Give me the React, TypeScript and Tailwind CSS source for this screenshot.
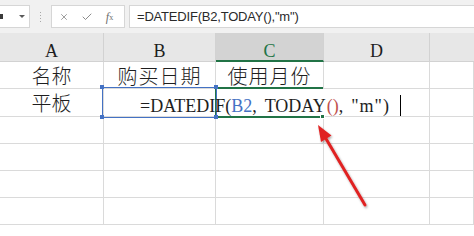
import React from "react";
import { X, Check } from "lucide-react";

const cols = "grid grid-cols-[104px_112px_108px_106px_1fr]";

function Cell({ children, className = "" }: { children?: React.ReactNode; className?: string }) {
  return (
    <div className={`flex items-center justify-center border-r border-b border-[#dadada] ${className}`}>
      {children}
    </div>
  );
}

export default function App() {
  const emptyHeights = ["h-[27px]", "h-[27px]", "h-[27px]", "h-[27px]"];
  return (
    <div className="relative w-[474px] h-[236px] overflow-hidden bg-white font-['Liberation_Serif',serif] text-[#1e1e1e]">
      {/* toolbar */}
      <div className="h-[33px] bg-[#f1f1f1] flex items-start pt-[5px]">
        <div className="w-[30px] h-[23px] bg-white border border-l-0 border-[#d6d6d6] flex items-center">
          <div className="w-[3px] h-[5px] bg-[#3a3a3a]" />
          <div className="ml-auto mr-[4px] w-0 h-0 border-l-[3px] border-r-[3px] border-t-[3px] border-l-transparent border-r-transparent border-t-[#5a5a5a]" />
        </div>
        <div className="ml-[10px] mt-[7px] flex flex-col gap-[2px]">
          <div className="w-[1px] h-[1px] bg-[#a8a8a8]" />
          <div className="w-[1px] h-[1px] bg-[#a8a8a8]" />
          <div className="w-[1px] h-[1px] bg-[#a8a8a8]" />
          <div className="w-[1px] h-[1px] bg-[#a8a8a8]" />
        </div>
        <div className="ml-[10px] w-[74px] h-[23px] bg-white border border-[#d6d6d6] flex items-center">
          <span className="w-[23px] flex justify-center text-[#6e6e6e]">
            <X size={10} strokeWidth={1.6} />
          </span>
          <span className="w-[23px] flex justify-center text-[#6e6e6e]">
            <Check size={12} strokeWidth={1.6} />
          </span>
          <span className="w-[23px] flex justify-center text-[#6e6e6e] italic font-['Liberation_Serif',serif] text-[12px] leading-none">
            f<span className="text-[8px] not-italic mt-[3px]">x</span>
          </span>
        </div>
        <div className="ml-[4px] flex-1 h-[23px] bg-white border border-r-0 border-[#d6d6d6] flex items-center pl-[7px] font-['Liberation_Sans',sans-serif] text-[13px] tracking-[-0.2px] text-[#2a2a2a]">
          =DATEDIF(B2,TODAY(),"m")
        </div>
      </div>

      {/* column headers */}
      <div className={`${cols} h-[29px] bg-[#e7e7e7] text-[18px] leading-none`}>
        <div className="flex justify-center pt-[9px] border-r border-b border-[#d2d2d2]">A</div>
        <div className="flex justify-center pt-[9px] border-r border-b border-[#d2d2d2]">B</div>
        <div className="flex justify-center pt-[9px] bg-[#d3d3d3] text-[#217346] border-r border-[#d2d2d2] border-b-2 border-b-[#217346]">C</div>
        <div className="flex justify-center pt-[9px] border-r border-b border-[#d2d2d2]">D</div>
        <div className="border-b border-[#d2d2d2]" />
      </div>

      {/* row 1 */}
      <div className={`${cols} h-[27px] font-['Noto_Sans_CJK_SC',sans-serif] font-light text-[20px] leading-[20px]`}>
        <Cell className="pt-[2px]">名称</Cell>
        <Cell className="pt-[2px] tracking-[1px]">购买日期</Cell>
        <Cell className="pt-[2px] tracking-[1px]">使用月份</Cell>
        <Cell />
        <Cell />
      </div>

      {/* row 2 */}
      <div className={`${cols} h-[28px] font-['Noto_Sans_CJK_SC',sans-serif] font-light text-[20px] leading-[20px]`}>
        <Cell>平板</Cell>
        <Cell />
        <Cell className="border-r-transparent" />
        <Cell />
        <Cell />
      </div>

      {emptyHeights.map((h, i) => (
        <div key={i} className={`${cols} ${h}`}>
          <Cell />
          <Cell />
          <Cell />
          <Cell />
          <Cell />
        </div>
      ))}

      {/* C2 active cell border */}
      <div className="absolute left-[215px] top-[87px] w-[108px] h-[31px] border-t-2 border-b-2 border-l-2 border-[#217346]" />
      <div className="absolute left-[320px] top-[114px] w-[5px] h-[5px] bg-[#217346] border border-white" />

      {/* B2 reference border */}
      <div className="absolute left-[102px] top-[87px] w-[115px] h-[31px] border border-[#4472c4]" />
      <div className="absolute left-[100px] top-[85px] w-[4px] h-[4px] bg-[#4472c4]" />
      <div className="absolute left-[214px] top-[85px] w-[4px] h-[4px] bg-[#4472c4]" />
      <div className="absolute left-[100px] top-[115px] w-[4px] h-[4px] bg-[#4472c4]" />
      <div className="absolute left-[214px] top-[115px] w-[4px] h-[4px] bg-[#4472c4]" />

      {/* in-cell edit text */}
      <div className="absolute left-[140px] top-[95px] text-[18px] leading-[18px] whitespace-nowrap flex items-center text-[#1e1e1e]">
        <span>=DATEDIF(</span>
        <span className="text-[#4472c4]">B2</span>
        <span className="mr-[8px]">,</span>
        <span>TODAY</span>
        <span className="text-[#c0504d] ml-[1px]">()</span>
        <span className="mr-[8px]">,</span>
        <span className="tracking-[1px]">"m")</span>
        <span className="ml-[10px] inline-block w-[1px] h-[21px] bg-black" />
      </div>

      {/* red arrow */}
      <svg className="absolute left-0 top-0 pointer-events-none" width="474" height="236" viewBox="0 0 474 236">
        <defs>
          <filter id="sh" x="-20%" y="-20%" width="140%" height="140%">
            <feDropShadow dx="1" dy="1.5" stdDeviation="1" floodColor="#000" floodOpacity="0.35" />
          </filter>
        </defs>
        <g filter="url(#sh)">
          <line x1="365" y1="205" x2="325" y2="137" stroke="#e02424" strokeWidth="3" strokeLinecap="round" />
          <polygon points="318,125 331.5,135.5 321,142" fill="#e02424" />
        </g>
      </svg>
    </div>
  );
}
